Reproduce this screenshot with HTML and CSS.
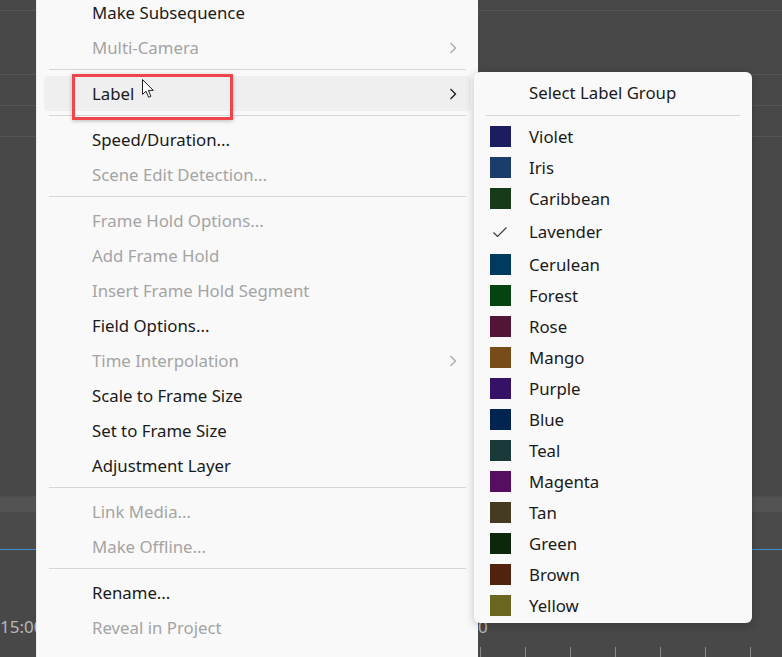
FILE: index.html
```html
<!DOCTYPE html>
<html lang="en">

<head>
    <meta charset="UTF-8">
    <title>Clip context menu</title>
    <link rel="stylesheet" href="styles.css">
</head>

<body>
    <!-- timeline panel behind the menus -->
    <div class="workspace">
        <div class="track t1"></div>
        <div class="track t2"></div>
        <div class="track t3"></div>
        <div class="track t4"></div>
        <div class="track t5"></div>
        <div class="track band"></div>
        <div class="track t6"></div>
        <div class="playline"></div>
        <div class="ruler">
            <span class="time">15:00</span>
            <span class="time zero">0</span>
        </div>
        <div class="ticks">
            <i></i><i></i><i></i><i></i><i></i><i></i><i></i>
        </div>
    </div>

    <div class="menu main">
        <div class="item">Make Subsequence</div>
        <div class="item off">Multi-Camera
            <svg class="chev" viewBox="0 0 8 12"><path d="M1.5 1 L6.5 6 L1.5 11" /></svg>
        </div>
        <div class="sep"></div>
        <div class="item hover">Label
            <svg class="chev" viewBox="0 0 8 12"><path d="M1.5 1 L6.5 6 L1.5 11" /></svg>
        </div>
        <div class="sep"></div>
        <div class="item">Speed/Duration...</div>
        <div class="item off">Scene Edit Detection...</div>
        <div class="sep"></div>
        <div class="item off">Frame Hold Options...</div>
        <div class="item off">Add Frame Hold</div>
        <div class="item off">Insert Frame Hold Segment</div>
        <div class="item">Field Options...</div>
        <div class="item off">Time Interpolation
            <svg class="chev" viewBox="0 0 8 12"><path d="M1.5 1 L6.5 6 L1.5 11" /></svg>
        </div>
        <div class="item">Scale to Frame Size</div>
        <div class="item">Set to Frame Size</div>
        <div class="item">Adjustment Layer</div>
        <div class="sep"></div>
        <div class="item off">Link Media...</div>
        <div class="item off">Make Offline...</div>
        <div class="sep"></div>
        <div class="item">Rename...</div>
        <div class="item off">Reveal in Project</div>
        <div class="item off">Reveal in Explorer...</div>
    </div>

    <div class="menu sub">
        <div class="row title">Select Label Group</div>
        <div class="sep"></div>
        <div class="row"><span class="swatch" style="background:#1c1c60"></span>Violet</div>
        <div class="row"><span class="swatch" style="background:#1c3c6b"></span>Iris</div>
        <div class="row"><span class="swatch" style="background:#173a18"></span>Caribbean</div>
        <div class="row checked">
            <svg class="check" viewBox="0 0 16 12"><path d="M1.5 6.5 L5.5 10.5 L14.5 1.5" /></svg>Lavender
        </div>
        <div class="row"><span class="swatch" style="background:#013a5c"></span>Cerulean</div>
        <div class="row"><span class="swatch" style="background:#054410"></span>Forest</div>
        <div class="row"><span class="swatch" style="background:#521535"></span>Rose</div>
        <div class="row"><span class="swatch" style="background:#784c19"></span>Mango</div>
        <div class="row"><span class="swatch" style="background:#351265"></span>Purple</div>
        <div class="row"><span class="swatch" style="background:#012451"></span>Blue</div>
        <div class="row"><span class="swatch" style="background:#1a3a3a"></span>Teal</div>
        <div class="row"><span class="swatch" style="background:#560e60"></span>Magenta</div>
        <div class="row"><span class="swatch" style="background:#453b22"></span>Tan</div>
        <div class="row"><span class="swatch" style="background:#0c270b"></span>Green</div>
        <div class="row"><span class="swatch" style="background:#51230e"></span>Brown</div>
        <div class="row"><span class="swatch" style="background:#6a6620"></span>Yellow</div>
    </div>

    <!-- annotation + mouse pointer -->
    <div class="highlight"></div>
    <svg class="cursor" viewBox="0 0 13 20">
        <path d="M0.5 0.5 L0.5 15.5 L4 12.2 L6.6 18.3 L8.9 17.3 L6.4 11.4 L11.3 11.4 Z" />
    </svg>
</body>

</html>
```

FILE: styles.css
```css
body {
    margin: 0;
    width: 782px;
    height: 657px;
    overflow: hidden;
    position: relative;
    background-color: #484848;
    font-family: 'Noto Sans', 'Open Sans', sans-serif;
    font-size: 16.8px;
    color: #1a1a1a;
}

/* background timeline */
.workspace {
    display: flex;
    flex-direction: column;
    height: 100%;
}

.track {
    border-bottom: 1px solid #545454;
    background-color: #484848;
}

.t1 { height: 10px; }
.t2 { height: 63px; }
.t3 { height: 30px; }
.t4 { height: 30px; }
.t5 { height: 359px; border-bottom-color: #4e4e4e; }

.band {
    height: 15px;
    background-color: #535353;
    border-bottom: none;
}

.t6 {
    height: 37px;
    background-color: #4a4a4a;
    border-bottom: none;
}

.playline {
    height: 1px;
    background-color: #3f8fd6;
}

.ruler {
    flex: 1;
    position: relative;
    background-color: #484848;
}

.time {
    display: block;
    margin-top: 66px;
    color: #b9b9b9;
    font-size: 17px;
    line-height: 22px;
}

.zero {
    position: absolute;
    left: 478px;
    top: 0;
}

.ticks {
    position: absolute;
    left: 480px;
    top: 647px;
    display: flex;
}

.ticks i {
    display: block;
    width: 1px;
    height: 10px;
    margin-right: 44px;
    background-color: #8a8a8a;
}

/* menus */
.menu {
    position: absolute;
    background-color: #f9f9f9;
}

.main {
    left: 36px;
    top: -5px;
    width: 442px;
    height: 690px;
    border-left: 1px solid #ececec;
    box-sizing: border-box;
}

.item {
    display: flex;
    align-items: center;
    height: 35px;
    margin: 0 7px 0 7px;
    padding: 0 14px 0 48px;
    border-radius: 4px;
    white-space: nowrap;
}

.item.off {
    color: #a4a4a4;
}

.item.hover {
    background-color: #efefef;
}

.chev {
    width: 8px;
    height: 12px;
    margin-left: auto;
}

.chev path {
    fill: none;
    stroke: #1a1a1a;
    stroke-width: 1.3;
}

.off .chev path {
    stroke: #a8a8a8;
}

.sep {
    height: 1px;
    margin: 4px 12px 6px 12px;
    background-color: #d6d6d6;
}

.sub {
    left: 474px;
    top: 72px;
    width: 278px;
    height: 551px;
    padding: 3px 0 2px;
    box-sizing: border-box;
    border-radius: 6px;
    box-shadow: 0 2px 10px rgba(0, 0, 0, 0.22);
}

.sub .sep {
    margin: 5px 12px 5px 12px;
}

.row {
    display: flex;
    align-items: center;
    height: 31px;
    padding-left: 16px;
    white-space: nowrap;
}

.row.title {
    height: 35px;
    padding-left: 55px;
}

.row.checked {
    height: 35px;
}

.swatch {
    width: 21px;
    height: 21px;
    margin-right: 18px;
}

.check {
    width: 16px;
    height: 12px;
    margin: 0 21px 0 2px;
}

.check path {
    fill: none;
    stroke: #3a3a3a;
    stroke-width: 1.2;
}

.highlight {
    position: absolute;
    left: 72px;
    top: 74px;
    width: 155px;
    height: 40px;
    border: 3px solid #f0454b;
    box-shadow: 0 1px 4px rgba(0, 0, 0, 0.25);
}

.cursor {
    position: absolute;
    left: 142px;
    top: 79px;
    width: 13px;
    height: 20px;
}

.cursor path {
    fill: #ffffff;
    stroke: #222222;
    stroke-width: 1;
    stroke-linejoin: round;
}
```
